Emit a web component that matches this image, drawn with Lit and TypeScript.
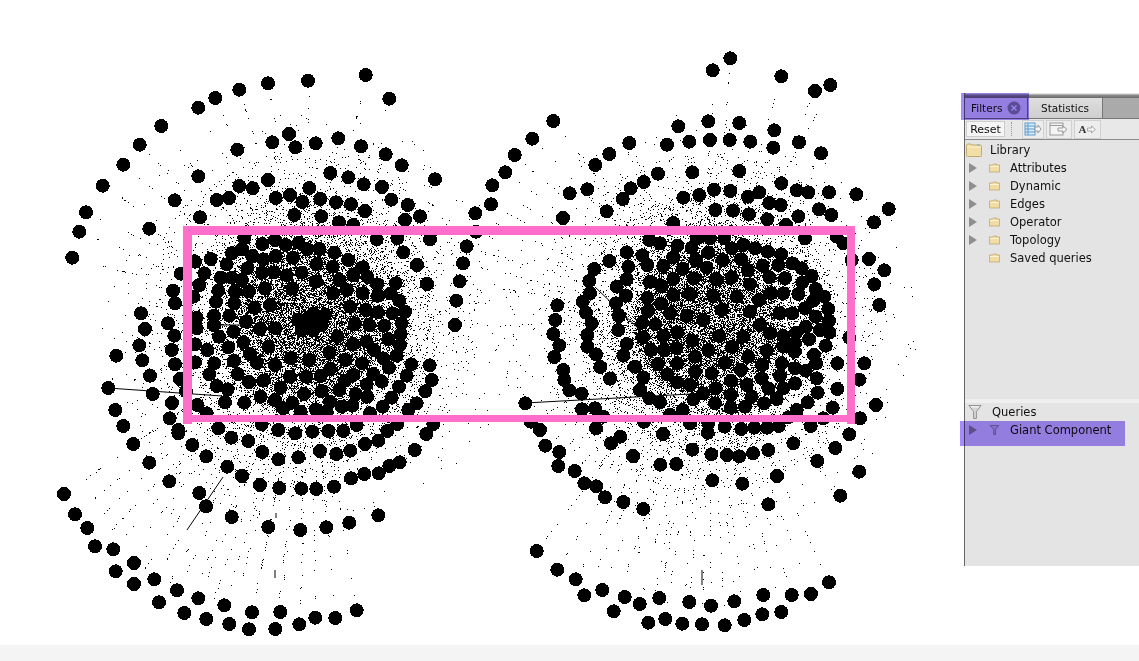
import { LitElement, html, css, svg } from "lit";
import { customElement } from "lit/decorators.js";

type Group = [number, number, number[]];
const groups: Group[] = [
  [50, 60, [947,45,1018,116,774,62,654,70,568,89,496,114,445,143,334,198,269,254,220,314,158,377,108,457,88,515,298,506,374,421,445,349,450,472,562,269,667,247,717,222,736,262,797,250,865,235,933,259,1007,283,1055,316,1155,358,841,339,895,352,941,373,996,381,1024,419,1073,435,1110,469,1065,480,654,360,568,378,608,385,537,414,500,420,677,414,720,405,778,384,757,426,811,417,858,427,903,433,945,453,733,465,814,469,867,487,910,495]],
  [50, 230, [67,83,392,131,369,182,375,220,273,250,285,297,354,280,373,317,268,346,365,360,199,377,277,391,375,403,300,437,390,447,175,474,308,492,408,484,366,519,196,540,359,565,220,588,385,600,
    583,25,637,42,675,30,707,45,746,38,772,58,808,56,853,68,980,28,1042,25,1140,28,1060,67,1101,105,1131,162,482,87,435,95,546,70,575,58,530,103,607,78,640,88,677,78,729,83,799,103,848,110,895,90,938,112,592,115,463,130,512,143,545,143,575,150,637,128,672,127,710,136,755,128,910,135,868,150,798,155,952,140,982,163,1037,160,448,165,505,182,555,185,597,184,645,175,727,175,890,180,850,190,938,190,985,197,1022,190,430,200,498,215,553,220,660,225,613,233,900,230,1048,212,1065,245,947,240,983,247,1027,250,492,257,538,257,440,263,588,275,1055,280,915,282,958,285,1003,287,492,285,440,295,630,297,677,295,550,305,507,320,862,320,1052,313,1015,327,580,337,950,335,910,342,435,343,535,352,472,360,655,350,1050,345,972,360,1040,377,600,372,838,367,435,397,552,392,493,400,620,398,722,385,778,390,887,390,937,400,1000,385,1017,413,1084,403,1139,406,675,405,478,433,563,432,1145,450,1070,437,840,418,812,438,768,440,720,440,640,452,597,456,910,435,885,452,970,432,995,455,950,463,868,480,500,468,533,478,692,473,1047,470,1126,484,762,492,815,483,917,492,632,500,675,510,952,500,1025,503,442,525,525,517,583,518,727,518,840,515,700,535,875,530,907,527,998,530,1100,520,1075,540,797,538,752,545,830,545,470,550,960,550,
    790,250,825,255,760,285,800,280,775,265,755,300,790,300,815,285,745,270]],
  [50, 420, [220,22,358,0,385,40,250,72,427,75,505,25,544,53,595,63,469,109,298,128,532,140,637,96,685,118,745,112,635,13,685,30,736,40,787,35,835,33,880,33,920,15,1012,33,1042,12,1150,12,1129,42,985,62,945,72,810,93,859,102,901,92,1094,90,1049,127,1018,138,986,160,943,162,903,175,852,200,799,207,754,206,688,204,630,195,576,168,358,184,448,219,42,222,468,259,75,283,112,324,545,291,655,321,751,330,829,322,898,308,985,286,135,379,190,388,252,429,197,454,313,478,252,492,381,511,445,535,327,547,523,556,606,577,691,576,920,571,403,579,469,597,538,612,597,628,676,627,748,613,796,593,856,594]],
  [440, 40, [871,55,818,91,1024,109,1171,135,1125,153,340,243,277,296,224,345,196,397,157,436,153,493,106,520,108,575,805,244,898,249,715,259,1003,271,748,305,810,300,869,300,931,305,681,314,568,309,1077,307,1000,323,1143,340,508,342,466,375,757,397,898,393,654,401,611,426,1024,430,572,445,442,448,389,460,822,449,871,453,778,465,730,473,548,477,924,470,958,457,1070,451,1105,457,1167,457,1249,463,1346,507,1302,547,988,489,1022,495,826,510,879,512,927,523,1137,508,1174,525,1075,529,982,538,1038,555,500,514,369,534,700,549]],
  [440, 230, [108,10,80,49,69,100,59,154,49,212,45,285,352,226,346,270,340,312,358,346,343,381,370,420,373,450,388,481,425,491,256,520,426,538,465,535,272,575,300,600,490,560,463,117,448,153,508,93,560,67,607,76,565,110,622,105,560,147,530,170,630,155,665,168,450,190,428,215,438,248,455,280,442,315,442,350,468,373,481,411,510,446,585,410,550,377,560,342,535,300,537,258,528,220,558,197,622,203,624,243,663,221,607,278,646,283,609,322,670,318,632,360,672,360,654,402,610,442,600,480,628,505,660,517,682,433,712,400,712,457,710,355,712,307,690,250,700,195,700,147,670,108,700,82,712,47,628,30,660,40,755,53,805,68,768,90,728,117,762,145,800,113,848,90,903,88,923,120,968,107,1015,105,1057,100,875,55,910,45,945,55,983,65,1024,73,1085,115,1115,138,1035,145,988,142,875,142,828,147,750,192,820,198,890,200,930,163,993,190,1030,190,1087,157,1075,192,1127,177,1153,200,957,210,1120,212,845,240,740,258,790,270,930,245,1020,250,1057,250,1095,235,1165,237,1127,260,1167,272,960,285,1097,290,1140,300,1168,308,990,310,1030,318,1068,308,1107,328,910,320,838,318,757,332,877,350,805,360,1157,347,980,362,1030,350,1065,340,1122,375,1063,365,925,380,855,398,765,380,715,400,765,425,815,430,903,420,967,405,1025,400,1065,415,1097,422,1192,400,1273,400,1128,400,1020,437,873,452,965,445,1130,445,1258,449,750,465,920,465,1065,460,827,475,985,475,1030,475,1192,477,1133,488,873,495,935,500,760,508,790,490,825,520,872,533,915,530,972,520,1010,507,1103,517,1178,533,1308,525,728,540,690,555,1070,540,1260,565,1045,562,1150,565,1287,87,1235,90,1333,121,1303,163,1318,225,1228,323,1095,25,1190,20,1210,40,770,25,810,25,853,25]],
  [510, 420, [62,5,90,37,106,77,148,96,145,138,194,153,223,190,259,199,285,232,340,246,400,267,80,393,142,449,197,478,223,526,277,510,344,531,389,552,448,534,311,574,538,546,603,557,673,544,760,525,845,525,903,522,957,487,814,576,757,583,703,600,644,616,576,613,517,611,466,597,415,608,258,25,303,70,331,50,369,108,451,134,499,132,459,42,547,89,604,103,651,105,688,109,729,100,775,90,850,70,976,84,1018,43,922,123,801,168,607,181,697,191,775,253,991,227,1048,155,593,38,644,20,694,27,733,23,771,23,806,18,902,18,1050,2,402,5,540,10,595,10,835,0,938,3]],
];

const nodes: [number, number][] = [];
for (const [ox, oy, list] of groups) {
  for (let i = 0; i < list.length; i += 2) {
    const x = ox + list[i] / 3;
    const y = oy + list[i + 1] / 3;
    if (!nodes.some(([a, b]) => Math.hypot(a - x, b - y) < 3)) nodes.push([x, y]);
  }
}

let seed = 12345;
const rnd = () => {
  seed = (seed * 1664525 + 1013904223) >>> 0;
  return seed / 4294967296;
};

const HUBS: [number, number][] = [[310, 320], [708, 322]];
const density = (r: number) =>
  r < 45 ? 0.55 : r < 75 ? 0.42 : r < 100 ? 0.2 : r < 130 ? 0.08 : r < 170 ? 0.02 : r < 210 ? 0.004 : 0;

let dots = "";
const dot = (x: number, y: number) => {
  dots += `M${Math.round(x)} ${Math.round(y)}h1v1h-1z`;
};
for (const [hx, hy] of HUBS) {
  for (let y = hy - 210; y <= hy + 210; y++) {
    for (let x = hx - 210; x <= hx + 210; x++) {
      if (rnd() < density(Math.hypot(x - hx, y - hy))) dot(x, y);
    }
  }
}
for (const [x, y] of nodes) {
  const [hx, hy] = x < 448 ? HUBS[0] : HUBS[1];
  const d = Math.hypot(x - hx, y - hy);
  const n = Math.floor(d / 15);
  for (let i = 0; i < n; i++) {
    const t = 0.25 + rnd() * 0.7;
    dot(hx + (x - hx) * t + (rnd() - 0.5), hy + (y - hy) * t + (rnd() - 0.5));
  }
}

const lines: [number, number, number, number][] = [
  [108, 388, 222, 396], [525, 403, 690, 394], [702, 570, 702, 585], [275, 570, 275, 578],
  [276, 513, 276, 518], [223, 477, 187, 530], [595, 287, 642, 332], [220, 325, 240, 325],
];

const arrow = html`<svg class="arrow" viewBox="0 0 8 10"><path d="M0 0L8 5L0 10Z" /></svg>`;
const folder = html`<svg class="small" viewBox="0 0 11 9">
  <path d="M.5 1.5h3l1-1h3v1h3v7h-10z" fill="#f1dca3" stroke="#b9a26c" stroke-width=".7" />
  <path d="M1 3h9" stroke="#fff4cf" />
</svg>`;
const funnel = html`<svg class="small" viewBox="0 0 11 12">
  <path d="M.5.5h10L6.6 5.5v6h-2v-6z" fill="#d0d0d0" stroke="#7d7d7d" />
</svg>`;

const rows = ["Attributes", "Dynamic", "Edges", "Operator", "Topology", "Saved queries"];

@customElement("app-root")
export class AppRoot extends LitElement {
  static styles = css`
    :host {
      display: flex;
      flex-direction: column;
      width: 1139px;
      height: 661px;
      background: #fff;
      overflow: hidden;
      font-family: "DejaVu Sans", "Liberation Sans", sans-serif;
      font-size: 11.5px;
      color: #111;
    }
    .main { display: flex; height: 645px; flex: none; }
    .foot { flex: 1; background: #f4f4f4; }
    .canvas { display: block; flex: none; width: 964px; height: 645px; }
    .panel {
      position: relative;
      flex: 1;
      margin-top: 93px;
      height: 473px;
      display: flex;
      flex-direction: column;
      background: #e4e4e4;
      border-left: 1px solid #666;
    }
    .strip { height: 5px; flex: none; background: linear-gradient(#fff, #8a8a8a 45%, #6a6a6a); }
    .tabs { display: flex; height: 21px; flex: none; background: #aaa; border-bottom: 1px solid #777; box-sizing: border-box; }
    .tab { display: flex; align-items: center; box-sizing: border-box; font-size: 10.5px; }
    .tab.on { width: 63px; padding-left: 6px; gap: 5px; background: #e6e6e6; border-right: 1px solid #777; }
    .tab.off { width: 75px; justify-content: center; background: linear-gradient(#dedede, #cfcfcf); border-right: 1px solid #777; }
    .close { width: 14px; height: 14px; }
    .toolbar {
      display: flex;
      align-items: center;
      height: 21px;
      flex: none;
      box-sizing: border-box;
      padding-left: 1px;
      border-bottom: 1px solid #8a8a8a;
      background: #e8e8e8;
    }
    .reset {
      display: flex;
      align-items: center;
      justify-content: center;
      width: 39px;
      height: 16px;
      box-sizing: border-box;
      background: #f5f5f5;
      border: 1px solid #cdcdcd;
      font-size: 11px;
    }
    .sep { width: 0; height: 14px; margin: 0 10px 0 6px; border-left: 1px dotted #999; }
    .tool {
      display: flex;
      align-items: center;
      justify-content: center;
      gap: 1px;
      width: 22px;
      height: 19px;
      margin-right: 2px;
      box-sizing: border-box;
      background: #ededed;
      border: 1px solid #d0d0d0;
      font-family: "Liberation Serif", serif;
      font-size: 11px;
      font-weight: 700;
      color: #333;
    }
    .tool.wide { width: 26px; }
    .tool.wider { width: 27px; margin-right: 0; }
    .tool svg { display: block; }
    .tree { flex: 1; }
    .head { display: flex; align-items: center; height: 19px; padding-left: 1px; gap: 8px; }
    .head.q { height: 18px; padding-left: 2px; gap: 9px; }
    .big { display: block; width: 16px; height: 14px; flex: none; }
    .row {
      display: grid;
      grid-template-columns: 20px 21px 1fr;
      align-items: center;
      height: 18px;
      padding-left: 4px;
    }
    .arrow { display: block; width: 8px; height: 10px; fill: #8f8f8f; }
    .small { display: block; width: 11px; height: 10px; }
    .split { height: 4px; flex: none; background: #efefef; }
    .queries { height: 163px; flex: none; }
    .mark {
      position: absolute;
      background: rgb(165, 140, 250);
      mix-blend-mode: multiply;
      pointer-events: none;
    }
    .m1 { left: -4px; top: 0; width: 68px; height: 27px; }
    .m2 { left: -5px; top: 328px; width: 165px; height: 25px; }
  `;

  render() {
    return html`
      <div class="main">
        <svg class="canvas" viewBox="0 0 964 645">
          <path d=${dots} fill="#000" shape-rendering="crispEdges" />
          ${lines.map(
            ([a, b, c, d]) => svg`<line x1=${a} y1=${b} x2=${c} y2=${d} stroke="#000" stroke-width="1" />`
          )}
          ${nodes.map(
            ([x, y]) => svg`<circle cx=${x.toFixed(1)} cy=${y.toFixed(1)} r="7" fill="#000" shape-rendering="crispEdges" />`
          )}
          <g fill="#ff6ecb" shape-rendering="crispEdges">
            <rect x="183" y="226" width="672" height="9" />
            <rect x="183" y="226" width="9" height="198" />
            <rect x="847" y="226" width="8" height="198" />
            <rect x="183" y="415" width="672" height="7" />
          </g>
        </svg>
        <div class="panel">
          <div class="strip"></div>
          <div class="tabs">
            <div class="tab on">
              Filters
              <svg class="close" viewBox="0 0 14 14">
                <circle cx="7" cy="7" r="6.5" fill="#8b8b96" />
                <path d="M4.5 4.5l5 5M9.5 4.5l-5 5" stroke="#e8e8f4" stroke-width="1.5" />
              </svg>
            </div>
            <div class="tab off">Statistics</div>
          </div>
          <div class="toolbar">
            <div class="reset">Reset</div>
            <div class="sep"></div>
            <div class="tool">
              <svg width="18" height="14" viewBox="0 0 18 14">
                <rect x="1" y="1" width="10" height="12" fill="#d8ecfa" stroke="#5f9ccb" />
                <path d="M1 4h10M1 7h10M1 10h10M4 1v12" stroke="#5f9ccb" />
                <path d="M11 5h3V3l3 4-3 4V9h-3z" fill="#f4f4f4" stroke="#999" />
              </svg>
            </div>
            <div class="tool wide">
              <svg width="20" height="14" viewBox="0 0 20 14">
                <rect x="1" y="1" width="13" height="12" fill="#f4f4f4" stroke="#9a9a9a" />
                <path d="M1 3.5h13" stroke="#9a9a9a" />
                <path d="M9 6h5V4l4 3.5-4 3.5V9H9z" fill="#f4f4f4" stroke="#999" />
              </svg>
            </div>
            <div class="tool wider">
              A<svg width="9" height="9" viewBox="0 0 9 9"><path d="M.5 3h4V1l4 3.500-4 3.500V6h-4z" fill="#f4f4f4" stroke="#aaa" /></svg>
            </div>
          </div>
          <div class="tree">
            <div class="head">
              <svg class="big" viewBox="0 0 16 14">
                <path d="M.5 2.500Q.5 1 2 1h3l1 1h8q1.500 0 1.500 1.500v9q0 1-1 1h-13q-1 0-1-1z" fill="#f2dfa8" stroke="#c2aa70" />
                <path d="M1 4h14" stroke="#fff3cc" />
                <rect x="11" y="1.500" width="3" height="1" fill="#6db4e8" />
              </svg>
              Library
            </div>
            ${rows.map(
              (r, i) => html`<div class="row">
                ${i < 5 ? arrow : html`<span></span>`} ${folder} <span>${r}</span>
              </div>`
            )}
          </div>
          <div class="split"></div>
          <div class="queries">
            <div class="head q">
              <svg class="big" viewBox="0 0 14 15">
                <path d="M.5.5h13L8.500 7v7.500h-3V7z" fill="#d6d6d6" stroke="#8a8a8a" />
                <path d="M2.500 2h9" stroke="#fff" />
              </svg>
              Queries
            </div>
            <div class="row">${arrow} ${funnel} <span>Giant Component</span></div>
          </div>
          <div class="mark m1"></div>
          <div class="mark m2"></div>
        </div>
      </div>
      <div class="foot"></div>
    `;
  }
}
